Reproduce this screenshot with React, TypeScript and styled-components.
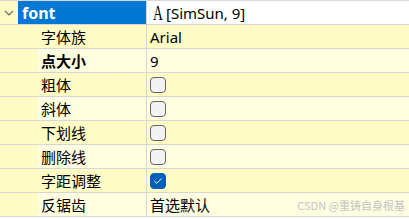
import React from 'react';
import styled, { createGlobalStyle } from 'styled-components';

const GlobalStyle = createGlobalStyle`
  html, body {
    margin: 0;
    padding: 0;
    background: #ffffff;
  }
  body {
    font-family: "Segoe UI", "Noto Sans", "Noto Sans CJK SC", sans-serif;
  }
`;

const Grid = styled.div`
  position: relative;
  width: 409px;
  height: 219px;
  border-top: 1px solid #d9d9d9;
  box-sizing: border-box;
  background: #ffffff;
  overflow: hidden;
`;

const Row = styled.div<{ $alt?: boolean }>`
  display: grid;
  grid-template-columns: 147px 1fr;
  height: 24px;
  border-bottom: 1px solid #d6d6d6;
  box-sizing: border-box;
  background: ${({ $alt }) => ($alt ? '#fffee0' : '#fffcc6')};
`;

const LabelCell = styled.div<{ $indent: number }>`
  display: flex;
  align-items: stretch;
  border-right: 1px solid #d6d6d6;
  min-width: 0;
`;

const Gutter = styled.div<{ $width: number }>`
  flex: 0 0 ${({ $width }) => $width}px;
  background: #fffcc6;
  display: flex;
  align-items: center;
  justify-content: center;
`;

const Label = styled.div<{ $bold?: boolean }>`
  flex: 1;
  display: flex;
  align-items: center;
  padding-left: 3px;
  font-family: "Noto Sans CJK SC", sans-serif;
  font-size: 15px;
  font-weight: ${({ $bold }) => ($bold ? 700 : 400)};
  color: #000;
`;

const Category = styled.div`
  flex: 1;
  display: flex;
  align-items: center;
  padding-left: 4px;
  background: #0078d4;
  color: #fff;
  font-family: "Segoe UI", "Noto Sans", sans-serif;
  font-size: 16px;
  font-weight: 700;
`;

const ValueCell = styled.div<{ $white?: boolean }>`
  display: flex;
  align-items: center;
  padding-left: 3px;
  background: ${({ $white }) => ($white ? '#ffffff' : 'transparent')};
  font-family: "Segoe UI", "Noto Sans", "Noto Sans CJK SC", sans-serif;
  font-size: 15px;
  color: #000;
  white-space: nowrap;
`;

const Preview = styled.span`
  display: inline-block;
  font-family: "Liberation Serif", serif;
  font-size: 22px;
  line-height: 1;
  transform: scaleX(0.62);
  transform-origin: left center;
  width: 13px;
  margin-left: 3px;
`;

const Box = styled.div<{ $checked?: boolean }>`
  width: 16px;
  height: 16px;
  box-sizing: border-box;
  border-radius: 4px;
  border: 1px solid ${({ $checked }) => ($checked ? '#005fb8' : '#666666')};
  background: ${({ $checked }) => ($checked ? '#005fb8' : '#f3f3f3')};
  display: flex;
  align-items: center;
  justify-content: center;
`;

const Watermark = styled.div`
  position: absolute;
  right: 4px;
  bottom: 6px;
  font-family: "Noto Sans CJK SC", sans-serif;
  font-size: 11px;
  color: #c4c4c4;
`;

type Item = { label: string; bold?: boolean; text?: string; check?: boolean };

const items: Item[] = [
  { label: '字体族', text: 'Arial' },
  { label: '点大小', bold: true, text: '9' },
  { label: '粗体', check: false },
  { label: '斜体', check: false },
  { label: '下划线', check: false },
  { label: '删除线', check: false },
  { label: '字距调整', check: true },
  { label: '反锯齿', text: '首选默认' },
];

const Checkbox = ({ checked }: { checked: boolean }) => (
  <Box $checked={checked}>
    {checked && (
      <svg width="10" height="8" viewBox="0 0 10 8">
        <path d="M1.5 4.2 L3.8 6.3 L8.5 1.6" fill="none" stroke="#fff" strokeWidth="1" />
      </svg>
    )}
  </Box>
);

export default function App() {
  return (
    <>
      <GlobalStyle />
      <Grid>
        <Row>
          <LabelCell $indent={18}>
            <Gutter $width={18}>
              <svg width="10" height="6" viewBox="0 0 10 6">
                <path d="M1 1 L5 5 L9 1" fill="none" stroke="#6b6b6b" strokeWidth="1.2" />
              </svg>
            </Gutter>
            <Category>font</Category>
          </LabelCell>
          <ValueCell $white>
            <Preview>A</Preview>
            <span>[SimSun, 9]</span>
          </ValueCell>
        </Row>
        {items.map((it, i) => (
          <Row key={it.label} $alt={i % 2 === 1}>
            <LabelCell $indent={38}>
              <Gutter $width={38} />
              <Label $bold={it.bold}>{it.label}</Label>
            </LabelCell>
            <ValueCell>
              {it.check !== undefined ? <Checkbox checked={it.check} /> : it.text}
            </ValueCell>
          </Row>
        ))}
        <Watermark>CSDN @重铸自身根基</Watermark>
      </Grid>
    </>
  );
}
